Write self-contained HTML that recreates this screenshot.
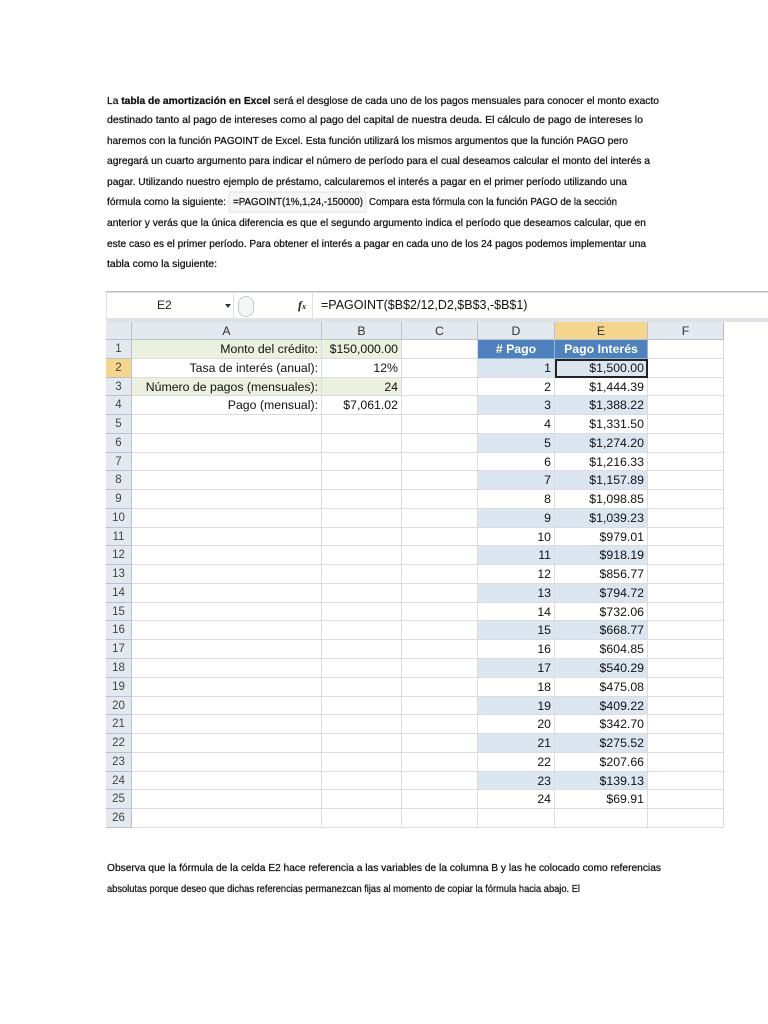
<!DOCTYPE html>
<html><head><meta charset="utf-8"><style>
*{margin:0;padding:0;box-sizing:border-box}
body{width:768px;height:1024px;background:#fff;position:relative;overflow:hidden;font-family:"Liberation Sans",sans-serif}
svg.t{position:absolute;left:0;top:0}
svg.t text{font-family:"Liberation Sans",sans-serif;font-size:10.5px;fill:#111;stroke:#111;stroke-width:0.25px}
svg.t tspan.b{font-weight:bold}
#fb{position:absolute;left:106px;top:291px;width:662px;height:31px;background:#dfe3e8;border-top:1px solid #b8bdc4}
#nb{position:absolute;left:107px;top:293px;width:126px;height:25px;background:#fff;font-size:12px;color:#222;padding:5px 0 0 50px}
#nb:after{content:"";position:absolute;top:11px;border:3.5px solid transparent;border-top:4px solid #333;right:2px}
#fx{position:absolute;left:234px;top:293px;width:78px;height:25px;background:#fff;font:italic bold 12px "Liberation Serif",serif;padding:5px 0 0 64px;color:#222}
#fx:before{content:"";position:absolute;left:4px;top:3px;width:14px;height:19px;border:1px solid #c5cbd3;border-radius:10px;background:#f4f6f8}
#ff{position:absolute;left:313px;top:293px;width:455px;height:25px;background:#fff;font-size:12.5px;color:#111;padding:5px 0 0 8px}
#g{position:absolute;left:106px;top:322px;display:grid;grid-template-columns:26px 190px 80px 76px 77px 93px 76px;grid-template-rows:18px repeat(26,18.77px)}
#g div{border-right:1px solid #dadcdf;border-bottom:1px solid #dadcdf;font-size:12.3px;color:#111;white-space:nowrap;overflow:hidden;line-height:18px;padding:0 3px;text-align:right}
#g .h{background:#e4e9ef;border-color:#b9c3cf;color:#333;text-align:center}
#g .rh{background:#e4e9ef;border-color:#b9c3cf;color:#444;text-align:center;font-size:11.5px}
#g .sel{background:#f6d68e}
#g .gr{background:#ebf1de}
#g .bl{background:#dce6f1}
#g .hd{background:#4f81bd;color:#fff;font-weight:bold;text-align:center;border-color:#95b3d7}
#g .act{outline:2px solid #222;outline-offset:-2px}
</style></head><body>
<svg class="t" width="768" height="1024">
<text x="107" y="104" textLength="552" lengthAdjust="spacingAndGlyphs">La <tspan class="b">tabla de amortización en Excel</tspan> será el desglose de cada uno de los pagos mensuales para conocer el monto exacto</text>
<text x="107" y="123" textLength="536" lengthAdjust="spacingAndGlyphs">destinado tanto al pago de intereses como al pago del capital de nuestra deuda. El cálculo de pago de intereses lo</text>
<text x="107" y="144" textLength="521" lengthAdjust="spacingAndGlyphs">haremos con la función PAGOINT de Excel. Esta función utilizará los mismos argumentos que la función PAGO pero</text>
<text x="107" y="164" textLength="543" lengthAdjust="spacingAndGlyphs">agregará un cuarto argumento para indicar el número de período para el cual deseamos calcular el monto del interés a</text>
<text x="107" y="185" textLength="520" lengthAdjust="spacingAndGlyphs">pagar. Utilizando nuestro ejemplo de préstamo, calcularemos el interés a pagar en el primer período utilizando una</text>
<rect x="229" y="192" width="137" height="20" fill="#f7f7f7" stroke="#e2e2e2"/>
<text x="107" y="205" textLength="119" lengthAdjust="spacingAndGlyphs">fórmula como la siguiente:</text>
<text x="233" y="205" textLength="130" lengthAdjust="spacingAndGlyphs">=PAGOINT(1%,1,24,-150000)</text>
<text x="369" y="205" textLength="248" lengthAdjust="spacingAndGlyphs">Compara esta fórmula con la función PAGO de la sección</text>
<text x="107" y="226" textLength="539" lengthAdjust="spacingAndGlyphs">anterior y verás que la única diferencia es que el segundo argumento indica el período que deseamos calcular, que en</text>
<text x="107" y="247" textLength="539" lengthAdjust="spacingAndGlyphs">este caso es el primer período. Para obtener el interés a pagar en cada uno de los 24 pagos podemos implementar una</text>
<text x="107" y="267" textLength="110" lengthAdjust="spacingAndGlyphs">tabla como la siguiente:</text>
<text x="107" y="871" textLength="554" lengthAdjust="spacingAndGlyphs">Observa que la fórmula de la celda E2 hace referencia a las variables de la columna B y las he colocado como referencias</text>
<text x="107" y="892" textLength="473" lengthAdjust="spacingAndGlyphs">absolutas porque deseo que dichas referencias permanezcan fijas al momento de copiar la fórmula hacia abajo. El</text>
</svg>
<div id="fb"></div>
<div id="nb">E2</div>
<div id="fx">f<span style="font-size:8px">x</span></div>
<div id="ff">=PAGOINT($B$2/12,D2,$B$3,-$B$1)</div>
<div id="g">
<div class="h"></div><div class="h">A</div><div class="h">B</div><div class="h">C</div><div class="h">D</div><div class="h sel">E</div><div class="h">F</div>
<div class="rh">1</div><div class="gr">Monto del crédito:</div><div class="gr">$150,000.00</div><div></div><div class="hd"># Pago</div><div class="hd">Pago Interés</div><div></div>
<div class="rh sel">2</div><div>Tasa de interés (anual):</div><div>12%</div><div></div><div class="bl">1</div><div class="bl act">$1,500.00</div><div></div>
<div class="rh">3</div><div class="gr">Número de pagos (mensuales):</div><div class="gr">24</div><div></div><div>2</div><div>$1,444.39</div><div></div>
<div class="rh">4</div><div>Pago (mensual):</div><div>$7,061.02</div><div></div><div class="bl">3</div><div class="bl">$1,388.22</div><div></div>
<div class="rh">5</div><div></div><div></div><div></div><div>4</div><div>$1,331.50</div><div></div>
<div class="rh">6</div><div></div><div></div><div></div><div class="bl">5</div><div class="bl">$1,274.20</div><div></div>
<div class="rh">7</div><div></div><div></div><div></div><div>6</div><div>$1,216.33</div><div></div>
<div class="rh">8</div><div></div><div></div><div></div><div class="bl">7</div><div class="bl">$1,157.89</div><div></div>
<div class="rh">9</div><div></div><div></div><div></div><div>8</div><div>$1,098.85</div><div></div>
<div class="rh">10</div><div></div><div></div><div></div><div class="bl">9</div><div class="bl">$1,039.23</div><div></div>
<div class="rh">11</div><div></div><div></div><div></div><div>10</div><div>$979.01</div><div></div>
<div class="rh">12</div><div></div><div></div><div></div><div class="bl">11</div><div class="bl">$918.19</div><div></div>
<div class="rh">13</div><div></div><div></div><div></div><div>12</div><div>$856.77</div><div></div>
<div class="rh">14</div><div></div><div></div><div></div><div class="bl">13</div><div class="bl">$794.72</div><div></div>
<div class="rh">15</div><div></div><div></div><div></div><div>14</div><div>$732.06</div><div></div>
<div class="rh">16</div><div></div><div></div><div></div><div class="bl">15</div><div class="bl">$668.77</div><div></div>
<div class="rh">17</div><div></div><div></div><div></div><div>16</div><div>$604.85</div><div></div>
<div class="rh">18</div><div></div><div></div><div></div><div class="bl">17</div><div class="bl">$540.29</div><div></div>
<div class="rh">19</div><div></div><div></div><div></div><div>18</div><div>$475.08</div><div></div>
<div class="rh">20</div><div></div><div></div><div></div><div class="bl">19</div><div class="bl">$409.22</div><div></div>
<div class="rh">21</div><div></div><div></div><div></div><div>20</div><div>$342.70</div><div></div>
<div class="rh">22</div><div></div><div></div><div></div><div class="bl">21</div><div class="bl">$275.52</div><div></div>
<div class="rh">23</div><div></div><div></div><div></div><div>22</div><div>$207.66</div><div></div>
<div class="rh">24</div><div></div><div></div><div></div><div class="bl">23</div><div class="bl">$139.13</div><div></div>
<div class="rh">25</div><div></div><div></div><div></div><div>24</div><div>$69.91</div><div></div>
<div class="rh">26</div><div></div><div></div><div></div><div></div><div></div><div></div>
</div>
</body></html>
